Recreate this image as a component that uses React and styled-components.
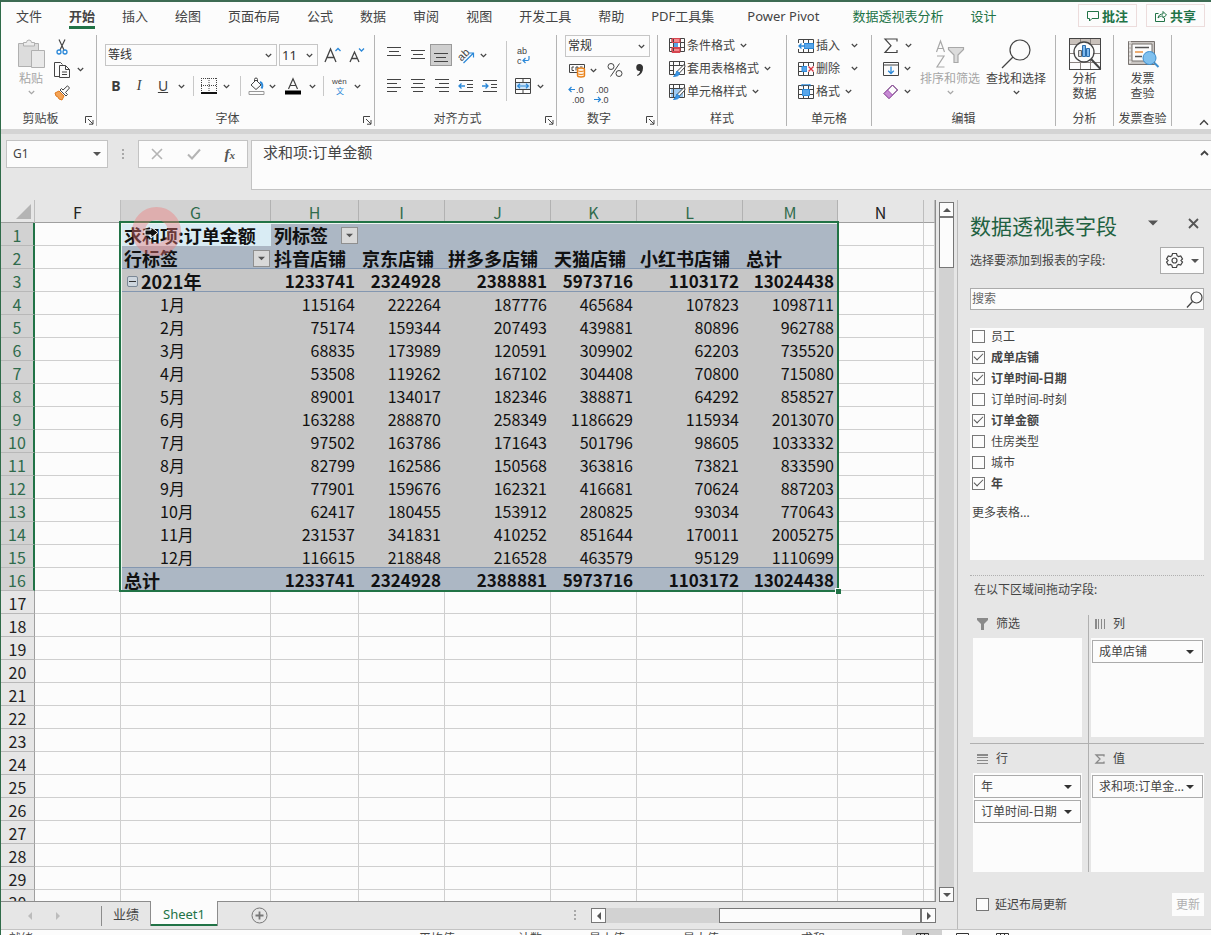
import React from "react";
import styled, { createGlobalStyle, css } from "styled-components";

const GREEN = "#217346";
const INK = "#444";
const BLUE = "#2b88d8";
const UI_FONT = '"Noto Sans", "Noto Sans CJK SC", sans-serif';
const GRID_FONT = '"Noto Sans CJK SC", "Liberation Sans", sans-serif';

const GlobalStyle = createGlobalStyle`
  * { box-sizing: border-box; }
  body { margin: 0; overflow: hidden; background: #e6e6e6; }
  button, input, select { font: inherit; color: inherit; margin: 0; }
  button { padding: 0; border: 0; background: none; }
  svg { display: block; flex: none; overflow: visible; }
`;

const Page = styled.div`
  display: flex;
  flex-direction: column;
  height: 100vh;
  overflow: hidden;
  border-top: 2px solid #3d6b53;
  border-left: 1px solid #2f6b49;
  background: #e6e6e6;
  color: ${INK};
  font: 12px/16px ${UI_FONT};
`;

/* ---------- ribbon tabs ---------- */
const TabBar = styled.nav`
  display: flex;
  align-items: flex-start;
  flex: none;
  height: 30px;
  padding: 0 6px 0 1px;
  background: #fcfcfc;
`;
const RibbonTab = styled.a`
  height: 27px;
  margin: 0 ${(p) => (p.$wide ? 19 : 13)}px 0 14px;
  padding-top: 5px;
  font-size: 13px;
  line-height: 18px;
  white-space: nowrap;
  text-decoration: none;
  color: ${(p) => (p.$context ? GREEN : INK)};
  border-bottom: 3px solid transparent;
  ${(p) => p.$active && css`font-weight: 700; border-color: ${GREEN};`}
`;
const TabSpacer = styled.div`flex: 1;`;
const CornerButton = styled.button`
  display: flex;
  align-items: center;
  justify-content: center;
  gap: 3px;
  width: 59px;
  height: 23px;
  margin: 2px 0 0 9px;
  border: 1px solid #ecdcdc;
  color: ${GREEN};
  font-size: 13px;
  font-weight: 700;
  line-height: 18px;
  white-space: nowrap;
`;

/* ---------- ribbon ---------- */
const Ribbon = styled.section`
  display: flex;
  flex: none;
  height: 97px;
  padding-top: 3px;
  background: #fcfcfc;
`;
const GroupBox = styled.div`
  display: flex;
  flex-direction: column;
  flex: none;
  width: ${(p) => p.$w}px;
  height: 91px;
  border-right: 1px solid #b4b4b4;
`;
const GroupBody = styled.div`
  display: flex;
  flex: 1;
  min-height: 0;
  padding-left: ${(p) => p.$pl || 0}px;
`;
const GroupFoot = styled.div`
  display: flex;
  height: 16px;
`;
const GroupName = styled.span`
  flex: 1;
  line-height: 18px;
  text-align: center;
  white-space: nowrap;
`;
const Launcher = styled.button`
  display: flex;
  align-items: flex-end;
  justify-content: flex-end;
  width: 16px;
  height: 15px;
  padding-right: 2px;
`;
const Stack = styled.div`
  display: flex;
  flex-direction: column;
  gap: ${(p) => p.$gap || 0}px;
  padding-top: ${(p) => p.$pt || 0}px;
`;
const Line = styled.div`
  display: flex;
  align-items: center;
  height: ${(p) => p.$h || 22}px;
`;
const Tool = styled.button`
  display: flex;
  align-items: center;
  justify-content: center;
  flex: none;
  width: ${(p) => p.$w || 24}px;
  height: 22px;
  color: #3c3c3c;
  ${(p) => p.$pressed && css`background: #cfcfcf; border: 1px solid #9a9a9a;`}
`;
const Rule = styled.span`
  width: 1px;
  height: ${(p) => p.$h || 20}px;
  margin: 0 6px;
  background: #c8c8c8;
`;
const TallRule = styled(Rule)`
  height: 60px;
  margin: 6px 3px 0 4px;
`;
const Glyph = styled.span`
  font-size: 14px;
  line-height: 18px;
  font-weight: ${(p) => (p.$bold ? 700 : 400)};
  font-style: ${(p) => (p.$italic ? "italic" : "normal")};
  text-decoration: ${(p) => (p.$under ? "underline" : "none")};
  font-family: ${(p) => (p.$serif ? '"Liberation Serif", serif' : "inherit")};
`;
const SelectFrame = styled.label`
  display: flex;
  align-items: center;
  width: ${(p) => p.$w}px;
  height: 22px;
  margin-right: 2px;
  padding: 0 4px 0 2px;
  border: 1px solid #c6c6c6;
  background: #fcfcfc;
`;
const PlainSelect = styled.select`
  flex: 1;
  min-width: 0;
  height: 20px;
  padding: 0;
  border: 0;
  appearance: none;
  background: transparent;
  font-size: ${(p) => p.$size || 12}px;
  color: #333;
`;
const BigButton = styled.button`
  display: flex;
  flex-direction: column;
  align-items: center;
  width: ${(p) => p.$w}px;
  height: 72px;
  padding-top: 2px;
  line-height: 15px;
  color: ${(p) => (p.$off ? "#a6a6a6" : INK)};
`;
const BigIcon = styled.span`
  display: flex;
  align-items: center;
  justify-content: center;
  height: 34px;
`;
const ChevronSlot = styled.span`
  display: flex;
  align-items: center;
  height: 13px;
`;
const MenuButton = styled.button`
  display: flex;
  align-items: center;
  height: 21px;
  width: ${(p) => (p.$w ? p.$w + "px" : "auto")};
  gap: 2px;
  color: ${INK};
  white-space: nowrap;
`;
const MenuText = styled.span`
  flex: ${(p) => (p.$grow ? 1 : "none")};
  margin-right: 3px;
  text-align: left;
`;
const RibbonEnd = styled.div`
  display: flex;
  flex: 1;
  align-items: flex-end;
  justify-content: flex-end;
  padding: 0 2px 3px 0;
`;

/* ---------- formula bar ---------- */
const FormulaBar = styled.section`
  display: flex;
  flex: none;
  align-items: flex-start;
  height: 71px;
  padding: 6px 0 0 5px;
  border-top: 5px solid #d4d4d4;
`;
const NameBox = styled.label`
  display: flex;
  align-items: center;
  width: 102px;
  height: 28px;
  padding: 0 6px;
  border: 1px solid #c3c3c3;
  background: #fcfcfc;
`;
const NameInput = styled.input`
  flex: 1;
  min-width: 0;
  padding: 0;
  border: 0;
  background: transparent;
`;
const Grip = styled.span`
  display: flex;
  align-items: center;
  justify-content: center;
  width: 30px;
  height: 28px;
`;
const EntryTools = styled.div`
  display: flex;
  align-items: center;
  justify-content: space-around;
  width: 110px;
  height: 28px;
  margin-right: 3px;
  border: 1px solid #c3c3c3;
  background: #fcfcfc;
`;
const FxLabel = styled.span`
  font: italic 700 15px/18px "Liberation Serif", serif;
  color: #555;
  & > small { font-size: 11px; }
`;
const FormulaBox = styled.label`
  display: flex;
  flex: 1;
  align-items: flex-start;
  justify-content: space-between;
  height: 50px;
  padding: 1px 2px 0 11px;
  border: solid #c3c3c3;
  border-width: 1px 0 1px 1px;
  background: #fcfcfc;
`;
const FormulaInput = styled.input`
  flex: 1;
  min-width: 0;
  height: 20px;
  padding: 0;
  border: 0;
  background: transparent;
  font: 15px/20px ${GRID_FONT};
`;
const CollapseSlot = styled.span`
  display: flex;
  align-items: center;
  height: 22px;
`;

/* ---------- workspace ---------- */
const Workspace = styled.main`
  display: flex;
  flex: 1;
  min-height: 0;
`;
const Book = styled.div`
  display: flex;
  flex-direction: column;
  flex: 1;
  min-width: 0;
`;
const BookTop = styled.div`
  display: flex;
  flex: 1;
  min-height: 0;
`;
const Sheet = styled.div`
  position: relative;
  flex: 1;
  min-width: 0;
  overflow: hidden;
  border-right: 1px solid #8c8c8c;
  border-bottom: 1px solid #8c8c8c;
  background: #fcfcfc;
`;
const GridTable = styled.table`
  width: 100%;
  table-layout: fixed;
  border-collapse: separate;
  border-spacing: 0;
  font: 16px/22px ${GRID_FONT};
  color: #111;
`;
const Col = styled.col`
  width: ${(p) => (p.$w ? p.$w + "px" : "auto")};
`;
const ColHead = styled.th`
  height: 23px;
  padding: 1px 0 0;
  font-weight: 400;
  line-height: 18px;
  background: ${(p) => (p.$sel ? "#d2d2d2" : "#e6e6e6")};
  color: ${(p) => (p.$sel ? "#2f6b4c" : "#222")};
  border-right: 1px solid ${(p) => (p.$sel ? "#b2b2b2" : "#bdbdbd")};
  border-bottom: 1px solid #9f9f9f;
`;
const CornerHead = styled(ColHead)`
  padding: 0 3px 3px 0;
  vertical-align: bottom;
  & > svg { margin-left: auto; }
`;
const RowHead = styled.th`
  height: 23px;
  padding: 2px 0 0;
  font-weight: 400;
  line-height: 20px;
  background: ${(p) => (p.$sel ? "#d2d2d2" : "#e6e6e6")};
  color: ${(p) => (p.$sel ? "#2f6b4c" : "#222")};
  border-right: ${(p) => (p.$sel ? "2px solid " + GREEN : "1px solid #9f9f9f")};
  border-bottom: 1px solid #b8b8b8;
`;
const Cell = styled.td`
  height: 23px;
  padding: 0;
  border-right: 1px solid #cfcfcf;
  border-bottom: 1px solid #cfcfcf;
`;
const PivotCell = styled.td`
  height: 23px;
  padding: 2px ${(p) => (p.$num ? 4 : 1)}px 0 ${(p) => (p.$month ? 39 : 3)}px;
  line-height: 20px;
  white-space: nowrap;
  text-align: ${(p) => (p.$num ? "right" : "left")};
  background: ${(p) => (p.$active ? "#d9ecf4" : p.$band ? "#acb7c4" : "#c6c6c6")};
  border-bottom: 1px solid
    ${(p) => (p.$ruled ? "#8497b0" : p.$active ? "#d9ecf4" : p.$band ? "#acb7c4" : "#c6c6c6")};
  font-weight: ${(p) => (p.$bold ? 700 : 400)};
  font-size: ${(p) => (p.$bold ? (p.$num ? 17 : 18) : 16)}px;
`;
const CellFlex = styled.div`
  display: flex;
  align-items: center;
  justify-content: ${(p) => (p.$spread ? "space-between" : "flex-start")};
  gap: ${(p) => p.$gap || 0}px;
  height: 20px;
`;
const DropButton = styled.button`
  display: flex;
  align-items: center;
  justify-content: center;
  width: 17px;
  height: 17px;
  border: 1px solid #8f8f8f;
  background: #d9d9d9;
`;
const ToggleButton = styled.button`
  display: flex;
  align-items: center;
  justify-content: center;
  width: 11px;
  height: 11px;
  margin-left: 3px;
  border: 1px solid #7b8896;
  border-radius: 2px;
  background: #ced6de;
`;
const Selection = styled.div`
  position: absolute;
  left: 118px;
  top: 21px;
  width: 720px;
  height: 371px;
  border: 2px solid ${GREEN};
  box-shadow: inset 1px 1px 0 #eef6f0;
  pointer-events: none;
`;
const FillHandle = styled.span`
  position: absolute;
  right: -4px;
  bottom: -4px;
  width: 6px;
  height: 6px;
  border: solid #fcfcfc;
  border-width: 1px 0 0 1px;
  background: ${GREEN};
`;
const ClickRing = styled.div`
  position: absolute;
  left: 131px;
  top: 7px;
  width: 49px;
  height: 49px;
  border: 13px solid rgba(240, 120, 120, 0.4);
  border-radius: 50%;
  pointer-events: none;
`;
const Pointer = styled.svg`
  position: absolute;
  left: 143px;
  top: 26px;
`;

/* ---------- scroll bars ---------- */
const VScroll = styled.div`
  display: flex;
  flex-direction: column;
  width: 15px;
  margin: 2px 3px 0;
  background: #d2d2d2;
`;
const ScrollButton = styled.button`
  display: flex;
  align-items: center;
  justify-content: center;
  width: 15px;
  height: 15px;
  border: 1px solid #777;
  background: #fcfcfc;
`;
const VThumb = styled.div`
  height: 51px;
  border: 1px solid #777;
  background: #fcfcfc;
`;
const Fill = styled.div`flex: 1;`;

/* ---------- sheet tabs ---------- */
const SheetTabs = styled.div`
  display: flex;
  align-items: center;
  height: 27px;
  padding: 0 21px 0 15px;
`;
const NavArrow = styled.button`
  display: flex;
  width: 28px;
  justify-content: center;
`;
const TabRule = styled.span`
  width: 1px;
  height: 20px;
  margin-left: 29px;
  background: #8c8c8c;
`;
const SheetTab = styled.button`
  align-self: flex-start;
  height: 25px;
  margin-top: -1px;
  padding: 0 11px;
  font-size: 13px;
  line-height: 24px;
  white-space: nowrap;
  ${(p) =>
    p.$active &&
    css`
      position: relative;
      padding: 0 12px;
      color: ${GREEN};
      background: #fcfcfc;
      border: solid #8c8c8c;
      border-width: 0 1px;
      box-shadow: inset 0 -2px 0 ${GREEN};
    `}
`;
const AddSheet = styled.button`
  margin-left: 33px;
`;
const HScroll = styled.div`
  display: flex;
  width: 345px;
  height: 15px;
  margin: 0 0 0 15px;
  background: #d2d2d2;
`;
const HTrack = styled.div`
  width: 113px;
`;
const HThumb = styled.div`
  flex: 1;
  border: 1px solid #777;
  background: #fcfcfc;
`;

/* ---------- field pane ---------- */
const Pane = styled.aside`
  display: flex;
  flex-direction: column;
  flex: none;
  width: 254px;
  padding: 12px 7px 13px 12px;
  border-left: 1px solid #bababa;
`;
const PaneHead = styled.div`
  display: flex;
  align-items: center;
  height: 28px;
  padding-right: 5px;
`;
const PaneTitle = styled.h2`
  flex: 1;
  margin: 0;
  font-size: 21px;
  line-height: 28px;
  font-weight: 400;
  white-space: nowrap;
  color: #1e6141;
`;
const HeadButton = styled.button`
  margin: 0 0 6px 30px;
`;
const PaneRow = styled.div`
  display: flex;
  align-items: center;
  justify-content: space-between;
  margin-top: 7px;
`;
const GearButton = styled.button`
  display: flex;
  align-items: center;
  justify-content: center;
  gap: 8px;
  width: 44px;
  height: 27px;
  border: 1px solid #ababab;
  background: #fcfcfc;
`;
const SearchBox = styled.label`
  display: flex;
  align-items: center;
  height: 22px;
  margin-top: 14px;
  padding: 0 0 0 1px;
  border: 1px solid #ababab;
  background: #fcfcfc;
`;
const SearchInput = styled.input`
  flex: 1;
  min-width: 0;
  height: 18px;
  padding: 0 0 2px;
  border: 0;
  background: transparent;
  &::placeholder { color: #666; opacity: 1; }
`;
const FieldList = styled.div`
  display: flex;
  flex-direction: column;
  flex: 1;
  gap: 4px;
  min-height: 0;
  margin-top: 18px;
  padding-left: 2px;
  background: #fcfcfc;
`;
const CheckLabel = styled.label`
  display: flex;
  align-items: center;
  gap: 6px;
  height: 17px;
  white-space: nowrap;
  font-weight: ${(p) => (p.$on ? 700 : 400)};
`;
const CheckInput = styled.input`
  display: grid;
  place-items: center;
  flex: none;
  appearance: none;
  width: 13px;
  height: 13px;
  border: 1px solid #777;
  background: #fcfcfc;
  &:checked::after {
    content: "";
    width: 8px;
    height: 4px;
    margin-bottom: 4px;
    border: solid #555;
    border-width: 0 0 1px 1px;
    transform: rotate(-45deg);
  }
`;
const MoreTables = styled.a`
  margin-top: 8px;
  line-height: 17px;
  color: ${INK};
  text-decoration: none;
`;
const DragHint = styled.p`
  margin: 15px 0 0;
  padding: 5px 0 0 4px;
  border-top: 1px dotted #b0b0b0;
  line-height: 17px;
`;
const Areas = styled.div`
  display: grid;
  grid-template-columns: 119px 1fr;
  margin-top: 17px;
`;
const Area = styled.div`
  display: flex;
  flex-direction: column;
  padding: ${(p) => (p.$lower ? "6px" : "0")} ${(p) => (p.$left ? "6px" : "0")}
    ${(p) => (p.$lower ? "0" : "6px")} ${(p) => (p.$left ? "3px" : "2px")};
  border-right: ${(p) => (p.$left ? "1px solid #b0b0b0" : "0")};
  border-bottom: ${(p) => (p.$lower ? "0" : "1px solid #b0b0b0")};
`;
const AreaName = styled.div`
  display: flex;
  align-items: center;
  gap: 8px;
  height: 18px;
  padding-left: 4px;
`;
const AreaBox = styled.div`
  display: flex;
  flex-direction: column;
  gap: 2px;
  height: 99px;
  margin-top: 5px;
  padding: 2px 1px;
  background: #fcfcfc;
`;
const Chip = styled.button`
  display: flex;
  align-items: center;
  justify-content: space-between;
  height: 23px;
  padding: 0 8px 0 6px;
  border: 1px solid #ababab;
  background: #fcfcfc;
  white-space: nowrap;
`;
const PaneFoot = styled.div`
  display: flex;
  align-items: center;
  justify-content: space-between;
  height: 23px;
  margin-top: 21px;
  padding-left: 6px;
`;
const UpdateButton = styled.button`
  width: 32px;
  height: 23px;
  color: #b0b0b0;
  background: #fcfcfc;
`;

/* ---------- status bar ---------- */
const StatusBar = styled.footer`
  display: flex;
  flex: none;
  align-items: flex-start;
  height: 6px;
  overflow: hidden;
  padding-left: 8px;
  border-top: 1px solid #c3c3c3;
  background: #fcfcfc;
`;
const StatusItem = styled.span`
  width: ${(p) => p.$w}px;
  padding-top: 1px;
  white-space: nowrap;
`;
const ViewButton = styled.button`
  display: flex;
  justify-content: center;
  width: 40px;
  height: 24px;
  padding-top: 3px;
  background: ${(p) => (p.$on ? "#d0d0d0" : "transparent")};
`;
const StatusEnd = styled.div`
  width: 189px;
`;

/* ---------- icons ---------- */
const Icon = ({ w = 16, h = 16, children, ...rest }) => (
  <svg width={w} height={h} viewBox={`0 0 ${w} ${h}`} fill="none" stroke="#444" aria-hidden="true" {...rest}>
    {children}
  </svg>
);
const Chevron = ({ color = "#444" }) => (
  <Icon w={7} h={5} stroke={color}><path d="M.8 1l2.700 2.600L6.200 1" strokeWidth="1.200" /></Icon>
);
const UpChevron = () => (
  <Icon w={10} h={7} strokeWidth="1.400"><path d="M1 5.800L5 1.600l4 4.200" /></Icon>
);
const Triangle = ({ w = 8, color = "#555", dir = "down" }) => {
  const r = { down: 0, left: 90, up: 180, right: 270 }[dir];
  return (
    <Icon w={w} h={w} stroke="none" fill={color}>
      <path d={`M0 ${w / 4}H${w}L${w / 2} ${w * 0.75}Z`} transform={`rotate(${r} ${w / 2} ${w / 2})`} />
    </Icon>
  );
};
const LauncherIcon = () => (
  <Icon w={9} h={9}><path d="M.5 7V.5H7M3 3l5 5M8 4v4.200H4" /></Icon>
);
const PasteIcon = () => (
  <Icon w={28} h={32} stroke="#b0b0b0">
    <path d="M1.500 5.500h20v23h-20z" fill="#dcdcdc" />
    <path d="M6.500 8V4.500h3a2.500 2.500 0 0 1 5 0h3V8z" fill="#ececec" />
    <path d="M14.500 12.500h13v17h-13z" fill="#e9e9e9" />
  </Icon>
);
const CutIcon = () => (
  <Icon>
    <path d="M5 .5l5 10.500M11 .5L6 11" strokeWidth="1.200" />
    <circle cx="5" cy="13" r="2" stroke={BLUE} strokeWidth="1.300" /><circle cx="11" cy="13" r="2" stroke={BLUE} strokeWidth="1.300" />
  </Icon>
);
const CopyIcon = () => (
  <Icon w={17}>
    <path d="M5 14.500H.5V.5h6l2 2" /><path d="M5.500 3.500h6l4 4v8h-10zM11.500 3.500v4h4M8 10h5M8 12.500h5" />
  </Icon>
);
const BrushIcon = () => (
  <Icon>
    <path d="M1 8l4-2 5 5-2 4-3-1-1-2-2-1z" fill="#f4a456" stroke="#e07a1f" />
    <path d="M6 5l6 6 1.500-1.500-2-2L15.500 3 13.500.8 9 5 7.500 3.500z" fill="#fcfcfc" />
  </Icon>
);
const GrowFont = ({ small }) => (
  <Icon w={17} h={17}>
    <path d={small ? "M2 15L6.500 5 11 15M3.500 11.500h6" : "M1 15L6.500 2 12 15M3 10.500h7"} strokeWidth="1.300" />
    <path d={small ? "M11 1.500l2.500 2.500L16 1.500" : "M11.500 4L14 1.500 16.500 4"} stroke={BLUE} strokeWidth="1.300" />
  </Icon>
);
const BorderIcon = () => (
  <Icon>
    <path d="M.5 0v15M15.500 0v15M0 .5h16M8 0v15M0 7.500h16" strokeDasharray="1 1" />
    <path d="M0 15h16" strokeWidth="2" stroke="#111" />
  </Icon>
);
const FillIcon = () => (
  <Icon w={17} h={17}>
    <path d="M3 7l5-5 5 5-5 4.500zM6.500 4V1.500a1.500 1.500 0 0 1 3 0V4" />
    <path d="M12 4c2.500 1 3 4 1.500 6.500" stroke={BLUE} strokeWidth="2" />
    <path d="M1 13.500h15v3H1z" stroke="#999" />
  </Icon>
);
const FontColorIcon = () => (
  <Icon w={16} h={17}>
    <path d="M3.500 11L8 .8 12.500 11M5 7.500h6" strokeWidth="1.200" /><path d="M0 14.500h16" stroke="#000" strokeWidth="4" />
  </Icon>
);
const LinesIcon = ({ rows }) => (
  <Icon strokeWidth="1">{rows.map(([x1, x2, y]) => <path key={y} d={`M${x1} ${y}.5H${x2}`} />)}</Icon>
);
const IndentIcon = ({ out }) => (
  <Icon>
    <path d="M1 2.500h14M9 6.500h6M9 9.500h6M1 13.500h14" />
    <path d={out ? "M7 8H1M3.500 5.500L1 8l2.500 2.500" : "M0 8h6M3.500 5.500L6 8l-2.500 2.500"} stroke={BLUE} strokeWidth="1.300" />
  </Icon>
);
const SvgText = styled.text`
  font: ${(p) => p.$size || 9}px "Liberation Sans", "Noto Sans CJK SC", sans-serif;
  fill: ${(p) => p.$fill || "#444"};
  stroke: none;
`;
const OrientIcon = () => (
  <Icon w={17} h={17}>
    <SvgText $size={11} x="0" y="12" transform="rotate(-45 5 9)">ab</SvgText>
    <path d="M5.500 16L15.500 6M11 6h4.500v4.500" stroke={BLUE} strokeWidth="1.200" />
  </Icon>
);
const WrapIcon = () => (
  <Icon w={14} h={20}>
    <SvgText x="1" y="9">ab</SvgText><SvgText x="1" y="19">c</SvgText>
    <path d="M13 11v3q0 1.500-1.500 1.500H7M9.500 13L7 15.500 9.500 18" stroke={BLUE} strokeWidth="1.200" />
  </Icon>
);
const MergeIcon = () => (
  <Icon>
    <path d="M.5.500h15v15H.5zM.5 4.500h15M.5 11.500h15M8 .5v4M8 11.500v4" />
    <path d="M1 5h14v6H1z" fill="#cfe4f7" stroke="none" />
    <path d="M2.500 8h11M5 5.800L2.700 8 5 10.200M11 5.800L13.300 8 11 10.200" stroke={BLUE} strokeWidth="1.200" />
  </Icon>
);
const PhoneticIcon = () => (
  <Icon w={18} h={20}>
    <SvgText $size={8} x="1" y="8">wén</SvgText><SvgText $size={8} $fill={BLUE} x="5" y="18">文</SvgText>
  </Icon>
);
const CurrencyIcon = () => (
  <Icon w={17} h={15}>
    <path d="M.5 1.500h15v8H.5z" /><path d="M5 4H3v3.500h2M7 7.500V4h2v3.500M11 4h2.500" />
    <path d="M8.500 6.500c0-2 7-2 7 0v6c0 2-7 2-7 0z" fill="#fff2e2" stroke="#e8811a" strokeWidth="1.400" />
    <path d="M8.500 7.500c1 1.300 6 1.300 7 0M8.500 10.500c1 1.300 6 1.300 7 0" stroke="#e8811a" />
  </Icon>
);
const DecimalIcon = ({ more }) => (
  <Icon w={18} h={20}>
    <SvgText x={more ? 8 : 4} y="9">{more ? ".0" : ".00"}</SvgText>
    <SvgText x={more ? 4 : 9} y="19">{more ? ".00" : ".0"}</SvgText>
    <path d={more ? "M7 5.500H1M3.500 3L1 5.500 3.500 8" : "M2 15.500h6.500M6 13l2.500 2.500L6 18"} stroke={BLUE} strokeWidth="1.200" />
  </Icon>
);
const CondIcon = () => (
  <Icon>
    <path d="M3 .5h8v4H3zM3 10.500h8v4H3z" fill="#f5888d" stroke="#d64550" /><path d="M5 5h4v5H5z" fill="#5aa5e8" stroke="none" />
    <path d="M.5.500h15v13H.5zM4.500.5v13M11.500.5v13M.5 4.500h15M.5 9.500h15" />
    <path d="M3 .5h8v4H3zM3 9.500h8v4H3z" stroke="#d64550" />
  </Icon>
);
const TableIcon = ({ fill }) => (
  <Icon>
    {fill && <path d="M2 5h12v9H2z" fill="#9fcbf2" stroke="none" />}
    <path d="M.5.500h15v13H.5zM.5 4.500h15M.5 9.500h4M4.500.5v13M10.500.5v4" />
    <path d="M15.500 3L8 10.500l2 2L16 6z" fill="#fcfcfc" /><path d="M8 10l3 2.500Q9.500 15.500 4.500 15.500 7 13.500 8 10z" fill="#3d94e2" stroke={BLUE} />
  </Icon>
);
const CellIcon = ({ kind }) => (
  <Icon>
    <path d="M.5 1.500h15v13H.5zM5.500 1.500v13M10.500 1.500v13M.5 5.500h15M.5 10.500h15" />
    {kind === "insert" && <><path d="M6 5.500h9.500v5H6z" fill="#58a6ea" stroke={BLUE} /><path d="M0 5h6v6H0z" fill="#fcfcfc" stroke="none" /><path d="M7 8H1M3.500 5.500L1 8l2.500 2.500" stroke={BLUE} strokeWidth="1.300" /></>}
    {kind === "delete" && <><path d="M4 5.500h5v5H4z" fill="#58a6ea" stroke={BLUE} /><path d="M9 5h7v6H9z" fill="#fcfcfc" stroke="none" /><path d="M10.500 5.500l5 5M15.500 5.500l-5 5" stroke="#d8343f" strokeWidth="1.300" /></>}
    {kind === "format" && <><path d="M4.500 5.500h7v6h-7z" fill="#58a6ea" stroke={BLUE} /><path d="M4 .8h8M4 0v2.500M12 0v2.500" stroke={BLUE} /></>}
  </Icon>
);
const SigmaIcon = () => <Icon><path d="M14 3.500V1H2l6 6.700L2 14.500h12V12" strokeWidth="1.200" /></Icon>;
const FillDownIcon = () => (
  <Icon><path d="M.5 1.500h15v13H.5zM.5 4h15" /><path d="M8 5.500V12.500M5.200 9.800L8 12.500l2.800-2.700" stroke={BLUE} strokeWidth="1.300" /></Icon>
);
const EraserIcon = () => (
  <Icon>
    <path d="M1 9.500L9.500 1l5 5L6 14.500z" /><path d="M1 9.500L4.500 6l5 5L6 14.500z" fill="#c78bd4" stroke="#a04bb3" /><path d="M4.500 6l5-5 5 5-5 5" stroke="#a04bb3" />
  </Icon>
);
const SortIcon = () => (
  <Icon w={30} h={28} stroke="#a8a8a8" strokeWidth="1.200">
    <path d="M1.500 12L5.500 1l4 11M3 8.500h5M2 16h7L2 27h7.500" />
    <path d="M13.500 7.500h15v2L23 15v7.500h-4V15l-5.500-5.500z" fill="#dcdcdc" />
  </Icon>
);
const FindIcon = () => (
  <Icon w={30} h={30}><circle cx="19" cy="11" r="10" strokeWidth="1.200" /><path d="M12 18L1 29" strokeWidth="1.300" /></Icon>
);
const AnalyzeIcon = () => (
  <Icon w={32} h={32}>
    <path d="M.5.500h31v31H.5z" fill="#fcfcfc" /><path d="M1 1h30v5H1z" fill="#c9c1bb" stroke="none" />
    <path d="M.5 6.500h31M.5 15.500h31M.5 24.500h31M11.500 0v32M21.500 0v32" stroke="#8a8380" />
    <path d="M.5.500h31v31H.5z" /><circle cx="15" cy="14" r="10" fill="#fcfcfc" strokeWidth="1.300" />
    <path d="M22 21l9.500 10" strokeWidth="2" />
    <path d="M9.500 12.500h3v6h-3z" fill="#d8d8d8" stroke="#666" /><path d="M13.500 7.500h3v11h-3zM17.500 10.500h3v8h-3z" fill="#7fb9ee" stroke="#2a6cab" />
  </Icon>
);
const InvoiceIcon = () => (
  <Icon w={32} h={28}>
    <path d="M1.500 1.500h26v23h-26z" fill="#c9c5c2" stroke="#77726f" /><path d="M5 4h20v17H5z" fill="#fcfcfc" stroke="#77726f" />
    <path d="M3 1v24" strokeDasharray="2 2" stroke="#fcfcfc" /><path d="M8 7.500h14M8 16.500h7" stroke="#555" strokeWidth="1.500" /><path d="M8 12h8" stroke="#e89344" strokeWidth="1.500" />
    <circle cx="22.500" cy="18" r="6.500" fill="#7fc0ee" stroke="#3c8fd0" /><path d="M27.500 23l4 4" stroke="#3c8fd0" strokeWidth="2" />
  </Icon>
);
const GearIcon = () => (
  <Icon w={17} h={17} strokeWidth="1.200">
    <path d="M6.500 1.500h4l.6 2.200 1.400.8 2.200-.6 1.800 3.100-1.500 1.500 1.500 1.500-1.800 3.100-2.200-.6-1.400.8-.6 2.200h-4l-.6-2.200-1.400-.8-2.200.6L.6 10l1.500-1.500L.6 7l1.700-3.100 2.200.6 1.400-.8z" /><circle cx="8.500" cy="8.500" r="2.500" />
  </Icon>
);

/* ---------- data ---------- */
const TABS = [
  ["文件"], ["开始", "active"], ["插入"], ["绘图"], ["页面布局"], ["公式"], ["数据"], ["审阅"], ["视图"],
  ["开发工具"], ["帮助"], ["PDF工具集", "wide"], ["Power Pivot", "wide"], ["数据透视表分析", "context"], ["设计", "context"],
];
const COLS = [["F", 86], ["G", 150], ["H", 88], ["I", 86], ["J", 106], ["K", 86], ["L", 106], ["M", 95], ["N", 86]];
const TOTALS = [1233741, 2324928, 2388881, 5973716, 1103172, 13024438];
const MONTHS = [
  [115164, 222264, 187776, 465684, 107823, 1098711],
  [75174, 159344, 207493, 439881, 80896, 962788],
  [68835, 173989, 120591, 309902, 62203, 735520],
  [53508, 119262, 167102, 304408, 70800, 715080],
  [89001, 134017, 182346, 388871, 64292, 858527],
  [163288, 288870, 258349, 1186629, 115934, 2013070],
  [97502, 163786, 171643, 501796, 98605, 1033332],
  [82799, 162586, 150568, 363816, 73821, 833590],
  [77901, 159676, 162321, 416681, 70624, 887203],
  [62417, 180455, 153912, 280825, 93034, 770643],
  [231537, 341831, 410252, 851644, 170011, 2005275],
  [116615, 218848, 216528, 463579, 95129, 1110699],
];
const SHOPS = ["抖音店铺", "京东店铺", "拼多多店铺", "天猫店铺", "小红书店铺", "总计"];
const FIELDS = [
  ["员工", false], ["成单店铺", true], ["订单时间-日期", true], ["订单时间-时刻", false],
  ["订单金额", true], ["住房类型", false], ["城市", false], ["年", true],
];

/* ---------- parts ---------- */
function Group({ name, w, pl, launcher, children }) {
  return (
    <GroupBox $w={w}>
      <GroupBody $pl={pl}>{children}</GroupBody>
      <GroupFoot>
        <GroupName>{name}</GroupName>
        {launcher && <Launcher aria-label={`${name}设置`}><LauncherIcon /></Launcher>}
      </GroupFoot>
    </GroupBox>
  );
}
const Drop = ({ w = 14, label }) => <Tool $w={w} aria-label={label}><Chevron /></Tool>;

function pivotCells(row) {
  if (row === 1)
    return [
      <PivotCell key="a" $bold $band $active>求和项:订单金额</PivotCell>,
      <PivotCell key="b" $bold $band>
        <CellFlex $spread>列标签<DropButton aria-label="列标签筛选"><Triangle w={7} /></DropButton></CellFlex>
      </PivotCell>,
      ...[1, 2, 3, 4, 5].map((i) => <PivotCell key={i} $bold $band />),
    ];
  if (row === 2)
    return [
      <PivotCell key="a" $bold $band $ruled>
        <CellFlex $spread>行标签<DropButton aria-label="行标签筛选"><Triangle w={7} /></DropButton></CellFlex>
      </PivotCell>,
      ...SHOPS.map((s) => <PivotCell key={s} $bold $band $ruled>{s}</PivotCell>),
    ];
  if (row === 3 || row === 16) {
    const last = row === 16;
    return [
      <PivotCell key="a" $bold $band={last} $ruled={!last}>
        {last ? "总计" : (
          <CellFlex $gap={3}>
            <ToggleButton aria-label="折叠"><Icon w={7} h={1} stroke="none" fill="#333"><path d="M0 0h7v1H0z" /></Icon></ToggleButton>
            2021年
          </CellFlex>
        )}
      </PivotCell>,
      ...TOTALS.map((v) => <PivotCell key={v} $bold $num $band={last} $ruled={!last}>{v}</PivotCell>),
    ];
  }
  return [
    <PivotCell key="a" $month $ruled={row === 15}>{row - 3}月</PivotCell>,
    ...MONTHS[row - 4].map((v, i) => <PivotCell key={i} $num $ruled={row === 15}>{v}</PivotCell>),
  ];
}

function Grid() {
  return (
    <Sheet>
      <GridTable>
        <colgroup><Col $w={34} />{COLS.map(([c, w]) => <Col key={c} $w={w} />)}<Col /></colgroup>
        <thead>
          <tr>
            <CornerHead><Icon w={15} h={15} stroke="none" fill="#b4b4b4"><path d="M15 0v15H0z" /></Icon></CornerHead>
            {COLS.map(([c]) => <ColHead key={c} scope="col" $sel={c > "F" && c < "N"}>{c}</ColHead>)}
            <ColHead />
          </tr>
        </thead>
        <tbody>
          {Array.from({ length: 30 }, (_, i) => i + 1).map((r) => (
            <tr key={r}>
              <RowHead scope="row" $sel={r <= 16}>{r}</RowHead>
              <Cell />
              {r <= 16 ? pivotCells(r) : COLS.slice(1, 8).map(([c]) => <Cell key={c} />)}
              <Cell /><Cell />
            </tr>
          ))}
        </tbody>
      </GridTable>
      <Selection><FillHandle /></Selection>
      <ClickRing />
      <Pointer width="15" height="13" viewBox="0 0 15 13" aria-hidden="true">
        <path d="M1 4h6V1l7 5.500-7 5.500V9H1z" fill="#111" stroke="#fff" />
      </Pointer>
    </Sheet>
  );
}

function RibbonGroups() {
  return (
    <Ribbon>
      <Group name="剪贴板" w={96} pl={15} launcher>
        <BigButton $w={30} $off><BigIcon><PasteIcon /></BigIcon>粘贴<ChevronSlot><Chevron color="#a6a6a6" /></ChevronSlot></BigButton>
        <Stack $pt={1} $gap={2}>
          <Line $h={21}><Tool $w={32} aria-label="剪切"><CutIcon /></Tool></Line>
          <Line $h={21}><Tool $w={32} aria-label="复制"><CopyIcon /></Tool><Drop w={4} label="复制选项" /></Line>
          <Line $h={21}><Tool $w={32} aria-label="格式刷"><BrushIcon /></Tool></Line>
        </Stack>
      </Group>
      <Group name="字体" w={278} pl={8} launcher>
        <Stack $pt={9} $gap={9}>
          <Line>
            <SelectFrame $w={172}><PlainSelect aria-label="字体"><option>等线</option></PlainSelect><Chevron /></SelectFrame>
            <SelectFrame $w={39}><PlainSelect $size={13} aria-label="字号"><option>11</option></PlainSelect><Chevron /></SelectFrame>
            <Tool aria-label="增大字号"><GrowFont /></Tool><Tool aria-label="减小字号"><GrowFont small /></Tool>
          </Line>
          <Line>
            <Tool $w={22} aria-label="加粗"><Glyph $bold>B</Glyph></Tool>
            <Tool aria-label="倾斜"><Glyph $italic $serif>I</Glyph></Tool>
            <Tool $w={24} aria-label="下划线"><Glyph $under>U</Glyph></Tool>
            <Drop w={12} label="下划线选项" /><Rule />
            <Tool $w={18} aria-label="边框"><BorderIcon /></Tool><Drop w={16} label="边框选项" /><Rule />
            <Tool $w={18} aria-label="填充颜色"><FillIcon /></Tool><Drop w={14} label="填充选项" />
            <Tool $w={28} aria-label="字体颜色"><FontColorIcon /></Tool><Drop w={10} label="颜色选项" /><Rule />
            <Tool $w={20} aria-label="拼音"><PhoneticIcon /></Tool><Drop w={14} label="拼音选项" />
          </Line>
        </Stack>
      </Group>
      <Group name="对齐方式" w={182} pl={7} launcher>
        <Stack $pt={9} $gap={9}>
          <Line>
            <Tool aria-label="顶端对齐"><LinesIcon rows={[[1, 15, 0], [3, 13, 4], [1, 15, 8]]} /></Tool>
            <Tool aria-label="垂直居中"><LinesIcon rows={[[1, 15, 3], [3, 13, 7], [1, 15, 11]]} /></Tool>
            <Tool $w={22} $pressed aria-label="底端对齐"><LinesIcon rows={[[1, 15, 6], [3, 13, 10], [1, 15, 14]]} /></Tool>
            <Tool $w={28} aria-label="方向"><OrientIcon /></Tool><Drop w={6} label="方向选项" />
          </Line>
          <Line>
            <Tool aria-label="左对齐"><LinesIcon rows={[[1, 15, 1], [1, 11, 5], [1, 15, 9], [1, 11, 13]]} /></Tool>
            <Tool aria-label="居中"><LinesIcon rows={[[1, 15, 1], [3, 13, 5], [1, 15, 9], [3, 13, 13]]} /></Tool>
            <Tool aria-label="右对齐"><LinesIcon rows={[[1, 15, 1], [5, 15, 5], [1, 15, 9], [5, 15, 13]]} /></Tool>
            <Tool aria-label="减少缩进"><IndentIcon out /></Tool><Tool aria-label="增加缩进"><IndentIcon /></Tool>
          </Line>
        </Stack>
        <TallRule />
        <Stack $pt={9} $gap={9}>
          <Line><Tool $w={26} aria-label="自动换行"><WrapIcon /></Tool></Line>
          <Line><Tool $w={26} aria-label="合并后居中"><MergeIcon /></Tool><Drop w={8} label="合并选项" /></Line>
        </Stack>
      </Group>
      <Group name="数字" w={101} pl={8} launcher>
        <Stack $gap={2}>
          <SelectFrame $w={85}><PlainSelect aria-label="数字格式"><option>常规</option></PlainSelect><Chevron /></SelectFrame>
          <Line>
            <Tool aria-label="会计数字格式"><CurrencyIcon /></Tool><Drop w={8} label="货币选项" />
            <Tool $w={36} aria-label="百分比样式">
              <Icon><circle cx="4" cy="4.500" r="3" /><circle cx="12" cy="11.500" r="3" /><path d="M12.500 1.500L3.500 14.500" /></Icon>
            </Tool>
            <Tool $w={12} aria-label="千位分隔样式">
              <Icon w={9} h={14} stroke="none" fill="#333"><path d="M4.500 1a3.500 3.500 0 0 1 3.500 4c0 4-2 6.500-5.500 8l-.5-1c2-1 3-2.500 3-4A3.500 3.500 0 1 1 4.500 1z" /></Icon>
            </Tool>
          </Line>
          <Line><Tool aria-label="增加小数位数"><DecimalIcon more /></Tool><Tool aria-label="减少小数位数"><DecimalIcon /></Tool></Line>
        </Stack>
      </Group>
      <Group name="样式" w={129} pl={11}>
        <Stack $gap={2}>
          <MenuButton><CondIcon /><MenuText>条件格式</MenuText><Chevron /></MenuButton>
          <MenuButton><TableIcon /><MenuText>套用表格格式</MenuText><Chevron /></MenuButton>
          <MenuButton><TableIcon fill /><MenuText>单元格样式</MenuText><Chevron /></MenuButton>
        </Stack>
      </Group>
      <Group name="单元格" w={85} pl={11}>
        <Stack $gap={2}>
          <MenuButton $w={60}><CellIcon kind="insert" /><MenuText $grow>插入</MenuText><Chevron /></MenuButton>
          <MenuButton $w={60}><CellIcon kind="delete" /><MenuText $grow>删除</MenuText><Chevron /></MenuButton>
          <MenuButton><CellIcon kind="format" /><MenuText>格式</MenuText><Chevron /></MenuButton>
        </Stack>
      </Group>
      <Group name="编辑" w={184} pl={8}>
        <Stack $gap={2}>
          <Line $h={21}><Tool $w={22} aria-label="自动求和"><SigmaIcon /></Tool><Drop w={12} label="求和选项" /></Line>
          <Line $h={21}><Tool $w={22} aria-label="填充"><FillDownIcon /></Tool><Drop w={10} label="填充方向" /></Line>
          <Line $h={21}><Tool $w={22} aria-label="清除"><EraserIcon /></Tool><Drop w={10} label="清除选项" /></Line>
        </Stack>
        <BigButton $w={72} $off><BigIcon><SortIcon /></BigIcon>排序和筛选<ChevronSlot><Chevron color="#a6a6a6" /></ChevronSlot></BigButton>
        <BigButton $w={60}><BigIcon><FindIcon /></BigIcon>查找和选择<ChevronSlot><Chevron /></ChevronSlot></BigButton>
      </Group>
      <Group name="分析" w={58}>
        <BigButton $w={58}><BigIcon><AnalyzeIcon /></BigIcon>分析<br />数据</BigButton>
      </Group>
      <Group name="发票查验" w={58}>
        <BigButton $w={58}><BigIcon><InvoiceIcon /></BigIcon>发票<br />查验</BigButton>
      </Group>
      <RibbonEnd><button aria-label="折叠功能区"><UpChevron /></button></RibbonEnd>
    </Ribbon>
  );
}

function FieldPane() {
  return (
    <Pane>
      <PaneHead>
        <PaneTitle>数据透视表字段</PaneTitle>
        <HeadButton aria-label="窗格选项"><Triangle w={10} /></HeadButton>
        <HeadButton aria-label="关闭"><Icon w={11} h={11} stroke="#555" strokeWidth="1.800"><path d="M1 1l9 9M10 1l-9 9" /></Icon></HeadButton>
      </PaneHead>
      <PaneRow>
        选择要添加到报表的字段:
        <GearButton aria-label="工具"><GearIcon /><Triangle /></GearButton>
      </PaneRow>
      <SearchBox>
        <SearchInput placeholder="搜索" aria-label="搜索" />
        <Icon w={17} h={17}><circle cx="10.500" cy="6.500" r="5.500" strokeWidth="1.200" /><path d="M6.500 10.500l-5.500 6" strokeWidth="1.300" /></Icon>
      </SearchBox>
      <FieldList>
        {FIELDS.map(([f, on]) => (
          <CheckLabel key={f} $on={on}><CheckInput type="checkbox" defaultChecked={on} />{f}</CheckLabel>
        ))}
        <MoreTables href="#more">更多表格...</MoreTables>
      </FieldList>
      <DragHint>在以下区域间拖动字段:</DragHint>
      <Areas>
        <Area $left>
          <AreaName><Icon w={11} h={12} stroke="none" fill="#8a8a8a"><path d="M0 0h11v2L7 6v6H4V6L0 2z" /></Icon>筛选</AreaName>
          <AreaBox />
        </Area>
        <Area>
          <AreaName><Icon w={10} h={10} stroke="#8a8a8a"><path d="M1 0v10" strokeWidth="2" /><path d="M3.500 0v10M6.500 0v10M9.500 0v10" /></Icon>列</AreaName>
          <AreaBox><Chip>成单店铺<Triangle color="#333" /></Chip></AreaBox>
        </Area>
        <Area $left $lower>
          <AreaName><Icon w={11} h={10} stroke="#8a8a8a"><path d="M0 1h11" strokeWidth="2" /><path d="M0 3.500h11M0 6.500h11M0 9.500h11" /></Icon>行</AreaName>
          <AreaBox><Chip>年<Triangle color="#333" /></Chip><Chip>订单时间-日期<Triangle color="#333" /></Chip></AreaBox>
        </Area>
        <Area $lower>
          <AreaName><Icon w={10} h={10} stroke="#8a8a8a" strokeWidth="1.300"><path d="M9 2.500V1H1l4 4-4 4h8V7.500" /></Icon>值</AreaName>
          <AreaBox><Chip>求和项:订单金...<Triangle color="#333" /></Chip></AreaBox>
        </Area>
      </Areas>
      <PaneFoot>
        <CheckLabel><CheckInput type="checkbox" />延迟布局更新</CheckLabel>
        <UpdateButton disabled>更新</UpdateButton>
      </PaneFoot>
    </Pane>
  );
}

export default function App() {
  return (
    <Page>
      <GlobalStyle />
      <TabBar>
        {TABS.map(([t, kind]) => (
          <RibbonTab key={t} href="#tab" $active={kind === "active"} $context={kind === "context"} $wide={kind === "wide"}>{t}</RibbonTab>
        ))}
        <TabSpacer />
        <CornerButton>
          <Icon w={12} h={12} stroke={GREEN}><path d="M.5 1.500h11v7H5L2.500 11V8.500h-2z" /></Icon>批注
        </CornerButton>
        <CornerButton>
          <Icon w={12} h={12} stroke={GREEN}><path d="M3.500 3.500h-3v8h9V8M3 8c.5-3 2.500-4 5-4V1.500L11.500 5 8 8V6C6 6 4.500 6.500 3 8z" /></Icon>共享
        </CornerButton>
      </TabBar>
      <RibbonGroups />
      <FormulaBar>
        <NameBox><NameInput defaultValue="G1" aria-label="名称框" /><Triangle w={8} /></NameBox>
        <Grip><Icon w={2} h={11} stroke="none" fill="#a8a8a8"><path d="M0 0h2v2H0zM0 4h2v2H0zM0 8h2v2H0z" /></Icon></Grip>
        <EntryTools>
          <button aria-label="取消"><Icon w={12} h={12} stroke="#b4b4b4" strokeWidth="1.600"><path d="M1 1l10 10M11 1L1 11" /></Icon></button>
          <button aria-label="输入"><Icon w={14} h={12} stroke="#b4b4b4" strokeWidth="2"><path d="M1 6.500l4 4L13 1.500" /></Icon></button>
          <button aria-label="插入函数"><FxLabel>f<small>x</small></FxLabel></button>
        </EntryTools>
        <FormulaBox>
          <FormulaInput defaultValue="求和项:订单金额" aria-label="编辑栏" />
          <CollapseSlot><Icon w={9} h={6} strokeWidth="1.800"><path d="M1 5l3.500-3.500L8 5" /></Icon></CollapseSlot>
        </FormulaBox>
      </FormulaBar>
      <Workspace>
        <Book>
          <BookTop>
            <Grid />
            <VScroll>
              <ScrollButton aria-label="向上滚动"><Triangle dir="up" /></ScrollButton>
              <VThumb /><Fill />
              <ScrollButton aria-label="向下滚动"><Triangle /></ScrollButton>
            </VScroll>
          </BookTop>
          <SheetTabs>
            <NavArrow aria-label="上一张"><Triangle dir="left" color="#bcbcbc" /></NavArrow>
            <NavArrow aria-label="下一张"><Triangle dir="right" color="#bcbcbc" /></NavArrow>
            <TabRule />
            <SheetTab>业绩</SheetTab>
            <SheetTab $active>Sheet1</SheetTab>
            <AddSheet aria-label="新工作表">
              <Icon w={17} h={17} stroke="#777"><circle cx="8.500" cy="8.500" r="7.500" /><path d="M8.500 4.500v8M4.500 8.500h8" strokeWidth="1.800" /></Icon>
            </AddSheet>
            <Fill />
            <Icon w={2} h={11} stroke="none" fill="#a8a8a8"><path d="M0 0h2v2H0zM0 4h2v2H0zM0 8h2v2H0z" /></Icon>
            <HScroll>
              <ScrollButton aria-label="向左滚动"><Triangle dir="left" /></ScrollButton>
              <HTrack /><HThumb />
              <ScrollButton aria-label="向右滚动"><Triangle dir="right" /></ScrollButton>
            </HScroll>
          </SheetTabs>
        </Book>
        <FieldPane />
      </Workspace>
      <StatusBar>
        <StatusItem $w={410}>就绪</StatusItem>
        <StatusItem $w={99}>平均值</StatusItem>
        <StatusItem $w={71}>计数</StatusItem>
        <StatusItem $w={94}>最小值</StatusItem>
        <StatusItem $w={118}>最大值</StatusItem>
        <StatusItem $w={50}>求和</StatusItem>
        <Fill />
        <ViewButton $on aria-label="普通"><Icon w={13} h={12} stroke="#333"><path d="M.5.500h12v11H.5zM.5 4h12M4.500.5v11M8.500.5v11" /></Icon></ViewButton>
        <ViewButton aria-label="页面布局"><Icon w={13} h={12} stroke="#333"><path d="M.5.500h12v11H.5z" /></Icon></ViewButton>
        <ViewButton aria-label="分页预览"><Icon w={13} h={12} stroke="#333"><path d="M.5.500h12v11H.5zM.5 4h12M4.500.5v4M8.500.5v4" /></Icon></ViewButton>
        <StatusEnd />
      </StatusBar>
    </Page>
  );
}
